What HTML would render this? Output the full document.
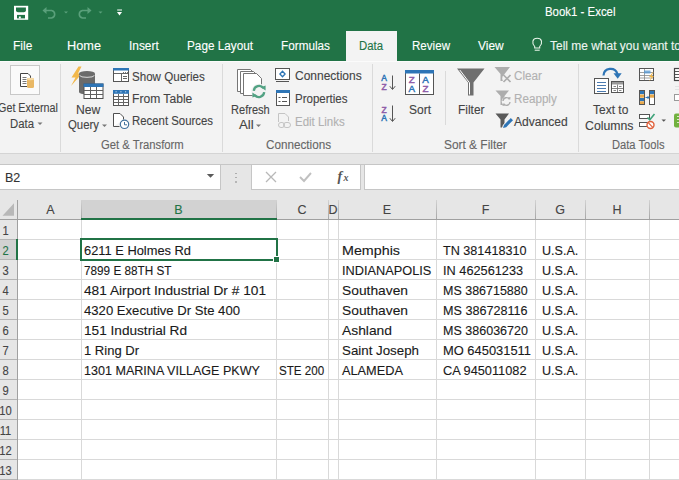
<!DOCTYPE html><html><head><meta charset="utf-8"><style>
html,body{margin:0;padding:0;}
body{width:679px;height:480px;overflow:hidden;position:relative;background:#e6e6e6;font-family:"Liberation Sans",sans-serif;}
body>div{position:absolute;}
.t{white-space:nowrap;line-height:normal;-webkit-text-stroke:0.12px currentColor;}
</style></head><body>
<div style="left:0px;top:0px;width:679px;height:61px;background:#217346"></div>
<div style="left:346px;top:31px;width:51px;height:31px;background:#f3f3f3"></div>
<div class="t" style="left:545.00px;top:5.09px;font-size:12.5px;color:#fff;transform:scaleX(0.9142);transform-origin:0 0;">Book1 - Excel</div>
<div class="t" style="left:13.00px;top:38.69px;font-size:12.5px;color:#fff;transform:scaleX(0.9582);transform-origin:0 0;">File</div>
<div class="t" style="left:67.00px;top:38.69px;font-size:12.5px;color:#fff;transform:scaleX(1.0197);transform-origin:0 0;">Home</div>
<div class="t" style="left:129.00px;top:38.69px;font-size:12.5px;color:#fff;transform:scaleX(0.9500);transform-origin:0 0;">Insert</div>
<div class="t" style="left:187.00px;top:38.69px;font-size:12.5px;color:#fff;transform:scaleX(0.9402);transform-origin:0 0;">Page Layout</div>
<div class="t" style="left:281.40px;top:38.69px;font-size:12.5px;color:#fff;transform:scaleX(0.9406);transform-origin:0 0;">Formulas</div>
<div class="t" style="left:412.30px;top:38.69px;font-size:12.5px;color:#fff;transform:scaleX(0.9271);transform-origin:0 0;">Review</div>
<div class="t" style="left:478.00px;top:38.69px;font-size:12.5px;color:#fff;transform:scaleX(0.9565);transform-origin:0 0;">View</div>
<div class="t" style="left:359.00px;top:38.69px;font-size:12.5px;color:#217346;transform:scaleX(0.9089);transform-origin:0 0;">Data</div>
<div class="t" style="left:550.00px;top:38.69px;font-size:12.5px;color:#eef5f0;transform:scaleX(0.9571);transform-origin:0 0;">Tell me what you want to</div>
<svg style="position:absolute;left:0;top:0" width="679" height="60"><rect x="14" y="5.8" width="14.2" height="14" fill="#fff"/><path d="M16 7.4H25.9V10.2Q25.9 12.2 23.9 12.2H18Q16 12.2 16 10.2Z" fill="#217346"/><rect x="17" y="14.9" width="8" height="3.5" fill="#217346"/><rect x="18.9" y="16.5" width="1.9" height="2" fill="#fff"/><path d="M45 10.5H51.5A3.8 3.8 0 0 1 51.5 18H48" stroke="#5aa07b" stroke-width="1.6" fill="none"/><path d="M42.5 10.5L46.5 7V14Z" fill="#5aa07b"/><path d="M89 10.5H82.5A3.8 3.8 0 0 0 82.5 18H86" stroke="#5aa07b" stroke-width="1.6" fill="none"/><path d="M91.5 10.5L87.5 7V14Z" fill="#5aa07b"/><path d="M64 11.5h4l-2 2z" fill="#5aa07b"/><path d="M98.5 11.5h4l-2 2z" fill="#5aa07b"/><path d="M117.2 10h4.8" stroke="#fff" stroke-width="1"/><path d="M117 12h5l-2.5 3.5z" fill="#fff"/><path d="M534.7 46.5C531.5 43 532.3 38.3 537.2 38.3C542.1 38.3 542.9 43 539.7 46.5V48H534.7Z" fill="none" stroke="#e8f5ea" stroke-width="1.1"/><path d="M534.7 50.2h5" stroke="#e8f5ea" stroke-width="1.1"/></svg>
<div style="left:0px;top:61px;width:679px;height:92px;background:#f3f3f3"></div>
<div style="left:0px;top:61px;width:679px;height:1px;background:#fbfbfb"></div>
<div style="left:0px;top:153px;width:679px;height:1px;background:#d4d4d4"></div>
<div class="t" style="left:-2.50px;top:101.19px;font-size:12.5px;color:#444;transform:scaleX(0.8621);transform-origin:0 0;">Get External</div>
<div class="t" style="left:10.30px;top:116.99px;font-size:12.5px;color:#444;transform:scaleX(0.9089);transform-origin:0 0;">Data</div>
<div class="t" style="left:75.50px;top:103.19px;font-size:12.5px;color:#444;transform:scaleX(0.9717);transform-origin:0 0;">New</div>
<div class="t" style="left:67.50px;top:117.69px;font-size:12.5px;color:#444;transform:scaleX(0.9107);transform-origin:0 0;">Query</div>
<div class="t" style="left:132.00px;top:69.69px;font-size:12.5px;color:#444;transform:scaleX(0.9273);transform-origin:0 0;">Show Queries</div>
<div class="t" style="left:132.00px;top:91.69px;font-size:12.5px;color:#444;transform:scaleX(0.9680);transform-origin:0 0;">From Table</div>
<div class="t" style="left:132.00px;top:114.19px;font-size:12.5px;color:#444;transform:scaleX(0.9108);transform-origin:0 0;">Recent Sources</div>
<div class="t" style="left:100.80px;top:138.19px;font-size:12.5px;color:#666;transform:scaleX(0.9019);transform-origin:0 0;">Get &amp; Transform</div>
<div class="t" style="left:230.60px;top:102.89px;font-size:12.5px;color:#444;transform:scaleX(0.8842);transform-origin:0 0;">Refresh</div>
<div class="t" style="left:239.30px;top:118.19px;font-size:12.5px;color:#444;transform:scaleX(1.0581);transform-origin:0 0;">All</div>
<div class="t" style="left:295.00px;top:69.39px;font-size:12.5px;color:#444;transform:scaleX(0.9598);transform-origin:0 0;">Connections</div>
<div class="t" style="left:295.00px;top:91.99px;font-size:12.5px;color:#444;transform:scaleX(0.9215);transform-origin:0 0;">Properties</div>
<div class="t" style="left:295.00px;top:114.69px;font-size:12.5px;color:#b1b1b1;transform:scaleX(0.9171);transform-origin:0 0;">Edit Links</div>
<div class="t" style="left:265.50px;top:137.69px;font-size:12.5px;color:#666;transform:scaleX(0.9368);transform-origin:0 0;">Connections</div>
<div class="t" style="left:409.00px;top:103.19px;font-size:12.5px;color:#444;transform:scaleX(0.9596);transform-origin:0 0;">Sort</div>
<div class="t" style="left:458.30px;top:103.19px;font-size:12.5px;color:#444;transform:scaleX(0.9540);transform-origin:0 0;">Filter</div>
<div class="t" style="left:513.80px;top:68.69px;font-size:12.5px;color:#b1b1b1;transform:scaleX(0.9373);transform-origin:0 0;">Clear</div>
<div class="t" style="left:513.80px;top:91.99px;font-size:12.5px;color:#b1b1b1;transform:scaleX(0.9332);transform-origin:0 0;">Reapply</div>
<div class="t" style="left:513.80px;top:115.19px;font-size:12.5px;color:#444;transform:scaleX(0.9641);transform-origin:0 0;">Advanced</div>
<div class="t" style="left:444.20px;top:137.69px;font-size:12.5px;color:#666;transform:scaleX(0.9517);transform-origin:0 0;">Sort &amp; Filter</div>
<div class="t" style="left:592.70px;top:103.49px;font-size:12.5px;color:#444;transform:scaleX(0.9587);transform-origin:0 0;">Text to</div>
<div class="t" style="left:585.40px;top:119.49px;font-size:12.5px;color:#444;transform:scaleX(0.9833);transform-origin:0 0;">Columns</div>
<div class="t" style="left:611.50px;top:137.69px;font-size:12.5px;color:#666;transform:scaleX(0.8924);transform-origin:0 0;">Data Tools</div>
<svg style="position:absolute;left:0;top:0" width="679" height="160" viewBox="0 0 679 160"><rect x="10.5" y="65.5" width="29" height="29" fill="#fafafa" stroke="#c8c8c8"/><path d="M20.5 73.5H28L30.5 76V86.5H20.5Z" fill="#fff" stroke="#444" stroke-width="1"/><path d="M22.5 77.5h4M22.5 79.5h4M22.5 81.5h4M22.5 83.5h4" stroke="#555" stroke-width="0.8"/><rect x="27" y="78" width="7" height="10" rx="1.5" fill="#e9b865"/><ellipse cx="30.5" cy="79" rx="3.5" ry="1.2" fill="#f6d9a3"/><path d="M37.5 122.5h5l-2.5 2.5z" fill="#777"/><path d="M78.5 66.5L71.5 77.5H75.5L71 86L82 73.5H78L81.5 66.5Z" fill="#f2b84b"/><path d="M79 73.5a8 2.5 0 0 1 16 0V92a8 2.5 0 0 1 -16 0Z" fill="#6b6b6b"/><path d="M79.6 75.5a7.5 2.2 0 0 0 14.8 0" stroke="#e8e8e8" stroke-width="0.9" fill="none"/><rect x="84" y="84" width="19" height="14.5" fill="#fff" stroke="#505050" stroke-width="1"/><rect x="83.5" y="83.5" width="20" height="3.5" fill="#2e75b6"/><path d="M90.5 87V98M96.5 87V98M84 90.5H103M84 94.5H103" stroke="#606060" stroke-width="1"/><path d="M102 124.5h5l-2.5 2.5z" fill="#777"/><rect x="113.5" y="68.5" width="15" height="13" fill="#fff" stroke="#555"/><rect x="113" y="68" width="16" height="2.5" fill="#2e75b6"/><path d="M123 72.5h1M125 72.5h1M127 72.5h1" stroke="#777" stroke-width="1"/><path d="M114 73.5H128M121.5 73.5V81.5M123 76.5h4M123 78.5h4" stroke="#666" stroke-width="1"/><rect x="113.5" y="90.5" width="15" height="15" fill="#fff" stroke="#555"/><rect x="113" y="90" width="16" height="3.8" fill="#2e75b6"/><path d="M115.5 91.8h1.2M120.3 91.8h1.2M125 91.8h1.2" stroke="#cfe0f3" stroke-width="1"/><path d="M118.5 94V105.5M123.5 94V105.5M114 96.5H128M114 99.5H128M114 102.5H128" stroke="#666" stroke-width="1"/><path d="M113.5 126.5V113.5H120L123.5 117V119.5M119.5 126.5H113.5" fill="#fff" stroke="#505050"/><circle cx="124.5" cy="124.3" r="4.2" fill="#fff" stroke="#41719c" stroke-width="1.2"/><path d="M124.5 122V124.8H127" stroke="#41719c" stroke-width="1" fill="none"/><path d="M237.5 69.5H250.5L255.5 74.5V91.5H237.5Z" fill="#fff" stroke="#666" stroke-width="0.9"/><path d="M240.5 71.5H253.5L258.5 76.5V93.5H240.5Z" fill="#fff" stroke="#666" stroke-width="0.9"/><path d="M243.5 73.5H256.5L261.5 78.5V95.5H243.5Z" fill="#fff" stroke="#666" stroke-width="0.9"/><circle cx="259" cy="91.5" r="7.8" fill="#f3f3f3"/><path d="M253.8 90.8a5.3 5.3 0 0 1 9.6 -2.6M264.2 92.2a5.3 5.3 0 0 1 -9.6 2.6" stroke="#52a283" stroke-width="2.3" fill="none"/><path d="M260.8 87.2l4.8 -1.6v4.8zM257.2 95.8l-4.8 1.6v-4.8z" fill="#52a283"/><path d="M256 124.5h5l-2.5 2.5z" fill="#777"/><rect x="275.5" y="68.5" width="14" height="11" fill="#fff" stroke="#555"/><path d="M276 81.5h13" stroke="#555"/><path d="M282.5 71.2l2.6 2.8l-2.6 2.8l-2.6 -2.8z" fill="none" stroke="#2e75b6" stroke-width="1.3"/><rect x="276.5" y="90.5" width="13" height="15" fill="#fff" stroke="#555"/><rect x="276" y="90" width="14" height="3" fill="#2e75b6"/><path d="M278.5 97.5h2M282 97.5h5M278.5 101.5h2M282 101.5h5" stroke="#555" stroke-width="1.1"/><path d="M278.5 122V113.5H285L288.5 117V121" fill="none" stroke="#c4c4c4"/><rect x="278.5" y="122.5" width="6" height="5" rx="2.5" fill="none" stroke="#c4c4c4"/><rect x="283.5" y="122.5" width="7" height="5" rx="2.5" fill="none" stroke="#c4c4c4"/><text x="381.2" y="81" font-family="Liberation Sans" font-size="8.5" fill="#2e75b6" stroke="#2e75b6" stroke-width="0.45">A</text><text x="381.6" y="89.5" font-family="Liberation Sans" font-size="8.5" fill="#8e5ba8" stroke="#8e5ba8" stroke-width="0.45">Z</text><path d="M392.5 75.5V89M389.8 86.2l2.7 3.3l2.7 -3.3" stroke="#555" stroke-width="1" fill="none"/><text x="381.6" y="112.5" font-family="Liberation Sans" font-size="8.5" fill="#8e5ba8" stroke="#8e5ba8" stroke-width="0.45">Z</text><text x="381.2" y="121.2" font-family="Liberation Sans" font-size="8.5" fill="#2e75b6" stroke="#2e75b6" stroke-width="0.45">A</text><path d="M392.5 105.5V121M389.8 118.2l2.7 3.3l2.7 -3.3" stroke="#555" stroke-width="1" fill="none"/><rect x="405.5" y="70.5" width="28" height="24" fill="#fff" stroke="#555"/><rect x="405" y="70" width="29" height="3.5" fill="#2e75b6"/><path d="M419.5 73.5V94.5" stroke="#555"/><text x="408.8" y="83.2" font-family="Liberation Sans" font-size="9.8" fill="#8e5ba8" stroke="#8e5ba8" stroke-width="0.45">Z</text><text x="422.3" y="83.2" font-family="Liberation Sans" font-size="9.8" fill="#2e75b6" stroke="#2e75b6" stroke-width="0.45">A</text><text x="408.5" y="92.2" font-family="Liberation Sans" font-size="9.8" fill="#2e75b6" stroke="#2e75b6" stroke-width="0.45">A</text><text x="422.6" y="92.2" font-family="Liberation Sans" font-size="9.8" fill="#8e5ba8" stroke="#8e5ba8" stroke-width="0.45">Z</text><path d="M457 68.5H484.5L473.5 82.5V95.5H468V82.5Z" fill="#6f6f6f"/><path d="M459.8 70L469.5 82.8V94.5" stroke="#fff" stroke-width="1" fill="none"/><path d="M494.5 67H510L504.5 74V81H500.5V74Z" fill="#adadad"/><circle cx="507" cy="78.5" r="4.8" fill="#f3f3f3"/><path d="M503.5 75l7 7M510.5 75l-7 7" stroke="#adadad" stroke-width="1.7"/><path d="M495.5 90.5H509L504.5 96V105H500.5V96Z" fill="#adadad"/><circle cx="506.5" cy="101.5" r="4.8" fill="#f3f3f3"/><path d="M503 101a3.5 3.5 0 0 1 6.5 -1.6M510 102a3.5 3.5 0 0 1 -6.5 1.6" stroke="#adadad" stroke-width="1.4" fill="none"/><path d="M508 97.5l2.5 -0.5l-0.3 2.8zM505 105.5l-2.5 0.5l0.3 -2.8z" fill="#adadad"/><path d="M495.5 113.5H509L504.5 119.5V127.5H500.5V119.5Z" fill="#5a5a5a"/><path d="M502.5 128.5l1 -3.2l7 -7.2l2.6 2.6l-7 7.2z" fill="#f3f3f3" stroke="#f3f3f3" stroke-width="1.4"/><path d="M503 128l1 -3l6.8 -7l2.2 2.2l-6.8 7z" fill="#2e75b6"/><rect x="594.5" y="78.5" width="14" height="15" fill="#fff" stroke="#555"/><path d="M597 82.5h9M597 85.5h9M597 88.5h9M597 91.5h9" stroke="#4a7ab0" stroke-width="1"/><rect x="611.5" y="81.5" width="12" height="11" fill="#fff" stroke="#555"/><rect x="612" y="82" width="11" height="2.5" fill="#999"/><path d="M617.5 84.5V92M612 88.5h11M613.5 86.5h2.5M619 86.5h2.5M613.5 90.5h2.5M619 90.5h2.5" stroke="#777" stroke-width="0.9"/><path d="M603.5 75.5C604 67.5 615 66.5 617.5 74" stroke="#2e75b6" stroke-width="2.2" fill="none"/><path d="M613.5 73.2h8.2l-4 5.6z" fill="#2e75b6"/><rect x="639.5" y="68.5" width="14" height="12" fill="#fff" stroke="#555"/><path d="M640 72.5h13M640 75.5h13M640 78h13M644.5 69V80" stroke="#888" stroke-width="0.8"/><rect x="644" y="70.5" width="6.5" height="3" fill="#5b9bd5" fill-opacity="0.8"/><path d="M653 72l-4 5h2.5l-2.5 4.5l5 -5.5h-2.5l2 -4z" fill="#f2b84b"/><rect x="639.5" y="90.5" width="5" height="14" fill="#fff" stroke="#555"/><rect x="649.5" y="90.5" width="5" height="14" fill="#fff" stroke="#555"/><rect x="640" y="91" width="4" height="3.2" fill="#2e75b6"/><rect x="640" y="94.5" width="4" height="3.2" fill="#e8a94c"/><rect x="640" y="98" width="4" height="3.2" fill="#2e75b6"/><rect x="640" y="101.3" width="4" height="2.7" fill="#e8a94c"/><rect x="650" y="91" width="4" height="3.2" fill="#2e75b6"/><rect x="650" y="94.5" width="4" height="3.2" fill="#e8a94c"/><path d="M645.5 97.5h3.5M647.5 96l1.5 1.5l-1.5 1.5" stroke="#2e75b6" stroke-width="1" fill="none"/><rect x="639.5" y="114.5" width="10" height="4" fill="#fff" stroke="#555"/><rect x="639.5" y="122.5" width="10" height="4" fill="#fff" stroke="#555"/><path d="M647.5 117.5l2.3 2.3l4.7 -5.8" stroke="#3fa37a" stroke-width="1.6" fill="none"/><circle cx="650.5" cy="125" r="3.5" fill="#fff" stroke="#e0603a" stroke-width="1.4"/><path d="M648.2 122.7l4.6 4.6" stroke="#e0603a" stroke-width="1.2"/><path d="M661.5 119.5h4.5l-2.25 2.3z" fill="#555"/><rect x="674.5" y="68.5" width="8" height="12" fill="#fff" stroke="#444" stroke-width="1.2"/><path d="M674.5 71.5h8M674.5 74.5h8M674.5 77.5h8" stroke="#444" stroke-width="0.9"/><path d="M679 86.5h-4M679 89.5h-4" stroke="#ddd" stroke-width="0.8"/><rect x="674.5" y="94.5" width="8" height="6" fill="#fff" stroke="#999"/><rect x="674" y="113.5" width="9" height="14" rx="2" fill="#72b13f"/><path d="M677 116.5h3M677 119.5h3M677 122.5h3" stroke="#d8ecc8" stroke-width="1"/></svg>
<div style="left:60px;top:64px;width:1px;height:88px;background:#dadada"></div>
<div style="left:222px;top:64px;width:1px;height:88px;background:#dadada"></div>
<div style="left:372px;top:64px;width:1px;height:88px;background:#dadada"></div>
<div style="left:578px;top:64px;width:1px;height:88px;background:#dadada"></div>
<div style="left:445px;top:71px;width:1px;height:54px;background:#dadada"></div>
<div style="left:0px;top:154px;width:679px;height:10px;background:#e6e6e6"></div>
<div style="left:0px;top:164px;width:679px;height:1px;background:#c6c6c6"></div>
<div style="left:0px;top:165px;width:221px;height:25px;background:#fff;border:1px solid #c6c6c6;border-left:none;border-top:none;box-sizing:border-box"></div>
<div class="t" style="left:4.50px;top:170.69px;font-size:12.5px;color:#333;transform:scaleX(1.0007);transform-origin:0 0;">B2</div>
<svg style="position:absolute;left:206px;top:173px" width="10" height="6"><path d="M0.8 1H8.2L4.5 4.8Z" fill="#5a5a5a"/></svg>
<div style="left:235px;top:172.6px;width:1.6px;height:1.6px;background:#a6a6a6;border-radius:1px"></div>
<div style="left:235px;top:176.8px;width:1.6px;height:1.6px;background:#a6a6a6;border-radius:1px"></div>
<div style="left:235px;top:181px;width:1.6px;height:1.6px;background:#a6a6a6;border-radius:1px"></div>
<div style="left:251px;top:164px;width:110px;height:26px;background:#fff;border:1px solid #c6c6c6;box-sizing:border-box"></div>
<svg style="position:absolute;left:264px;top:170px" width="14" height="14"><path d="M2 2L12 12M12 2L2 12" stroke="#b8b8b8" stroke-width="1.3" fill="none"/></svg>
<svg style="position:absolute;left:298px;top:170px" width="15" height="14"><path d="M2 7L6 11L13 3" stroke="#c0c0c0" stroke-width="1.9" fill="none"/></svg>
<svg style="position:absolute;left:331.5px;top:166px" width="24" height="20"><text x="5.5" y="14.5" font-family="Liberation Serif" font-style="italic" font-weight="bold" font-size="14" fill="#555">f</text><text x="11.5" y="14.5" font-family="Liberation Serif" font-style="italic" font-weight="bold" font-size="10" fill="#555">x</text></svg>
<div style="left:364px;top:164px;width:315px;height:26px;background:#fff;border:1px solid #c6c6c6;border-right:none;box-sizing:border-box"></div>
<div style="left:0px;top:200px;width:679px;height:19px;background:#e6e6e6"></div>
<div style="left:81px;top:200px;width:195px;height:19px;background:#d2d2d2"></div>
<div style="left:0px;top:219px;width:679px;height:1px;background:#a0a0a0"></div>
<div style="left:17px;top:200px;width:1px;height:280px;background:#a0a0a0"></div>
<div style="left:0px;top:220px;width:17px;height:260px;background:#e6e6e6"></div>
<div style="left:0px;top:239px;width:17px;height:21px;background:#d2d2d2"></div>
<svg style="position:absolute;left:0;top:200px" width="17" height="19"><path d="M2.5 15.7L14 15.7L14 3.2Z" fill="#b8b8b8"/></svg>
<div style="left:18px;top:220px;width:661px;height:260px;background:#fff"></div>
<div style="left:81px;top:200px;width:1px;height:19px;background:linear-gradient(#d2d2d2,#a6a6a6)"></div>
<div style="left:276px;top:200px;width:1px;height:19px;background:linear-gradient(#d2d2d2,#a6a6a6)"></div>
<div style="left:328px;top:200px;width:1px;height:19px;background:linear-gradient(#d2d2d2,#a6a6a6)"></div>
<div style="left:338px;top:200px;width:1px;height:19px;background:linear-gradient(#d2d2d2,#a6a6a6)"></div>
<div style="left:436px;top:200px;width:1px;height:19px;background:linear-gradient(#d2d2d2,#a6a6a6)"></div>
<div style="left:535px;top:200px;width:1px;height:19px;background:linear-gradient(#d2d2d2,#a6a6a6)"></div>
<div style="left:585px;top:200px;width:1px;height:19px;background:linear-gradient(#d2d2d2,#a6a6a6)"></div>
<div style="left:649px;top:200px;width:1px;height:19px;background:linear-gradient(#d2d2d2,#a6a6a6)"></div>
<div style="left:0px;top:239px;width:17px;height:1px;background:#b4b4b4"></div>
<div style="left:0px;top:259px;width:17px;height:1px;background:#b4b4b4"></div>
<div style="left:0px;top:279px;width:17px;height:1px;background:#b4b4b4"></div>
<div style="left:0px;top:299px;width:17px;height:1px;background:#b4b4b4"></div>
<div style="left:0px;top:319px;width:17px;height:1px;background:#b4b4b4"></div>
<div style="left:0px;top:339px;width:17px;height:1px;background:#b4b4b4"></div>
<div style="left:0px;top:359px;width:17px;height:1px;background:#b4b4b4"></div>
<div style="left:0px;top:379px;width:17px;height:1px;background:#b4b4b4"></div>
<div style="left:0px;top:399px;width:17px;height:1px;background:#b4b4b4"></div>
<div style="left:0px;top:419px;width:17px;height:1px;background:#b4b4b4"></div>
<div style="left:0px;top:439px;width:17px;height:1px;background:#b4b4b4"></div>
<div style="left:0px;top:459px;width:17px;height:1px;background:#b4b4b4"></div>
<div style="left:0px;top:479px;width:17px;height:1px;background:#b4b4b4"></div>
<div style="left:81px;top:220px;width:1px;height:260px;background:#d9d9d9"></div>
<div style="left:276px;top:220px;width:1px;height:260px;background:#d9d9d9"></div>
<div style="left:328px;top:220px;width:1px;height:260px;background:#d9d9d9"></div>
<div style="left:338px;top:220px;width:1px;height:260px;background:#d9d9d9"></div>
<div style="left:436px;top:220px;width:1px;height:260px;background:#d9d9d9"></div>
<div style="left:535px;top:220px;width:1px;height:260px;background:#d9d9d9"></div>
<div style="left:585px;top:220px;width:1px;height:260px;background:#d9d9d9"></div>
<div style="left:649px;top:220px;width:1px;height:260px;background:#d9d9d9"></div>
<div style="left:18px;top:239px;width:661px;height:1px;background:#d9d9d9"></div>
<div style="left:18px;top:259px;width:661px;height:1px;background:#d9d9d9"></div>
<div style="left:18px;top:279px;width:661px;height:1px;background:#d9d9d9"></div>
<div style="left:18px;top:299px;width:661px;height:1px;background:#d9d9d9"></div>
<div style="left:18px;top:319px;width:661px;height:1px;background:#d9d9d9"></div>
<div style="left:18px;top:339px;width:661px;height:1px;background:#d9d9d9"></div>
<div style="left:18px;top:359px;width:661px;height:1px;background:#d9d9d9"></div>
<div style="left:18px;top:379px;width:661px;height:1px;background:#d9d9d9"></div>
<div style="left:18px;top:399px;width:661px;height:1px;background:#d9d9d9"></div>
<div style="left:18px;top:419px;width:661px;height:1px;background:#d9d9d9"></div>
<div style="left:18px;top:439px;width:661px;height:1px;background:#d9d9d9"></div>
<div style="left:18px;top:459px;width:661px;height:1px;background:#d9d9d9"></div>
<div style="left:18px;top:479px;width:661px;height:1px;background:#d9d9d9"></div>
<div class="t" style="left:18.5px;width:64px;top:203.19px;text-align:center;font-size:12.5px;color:#444">A</div>
<div class="t" style="left:81px;width:195px;top:203.19px;text-align:center;font-size:12.5px;color:#217346">B</div>
<div class="t" style="left:276px;width:52px;top:203.19px;text-align:center;font-size:12.5px;color:#444">C</div>
<div class="t" style="left:328px;width:10px;top:203.19px;text-align:center;font-size:12.5px;color:#444">D</div>
<div class="t" style="left:338px;width:98px;top:203.19px;text-align:center;font-size:12.5px;color:#444">E</div>
<div class="t" style="left:436px;width:99px;top:203.19px;text-align:center;font-size:12.5px;color:#444">F</div>
<div class="t" style="left:535px;width:50px;top:203.19px;text-align:center;font-size:12.5px;color:#444">G</div>
<div class="t" style="left:585px;width:64px;top:203.19px;text-align:center;font-size:12.5px;color:#444">H</div>
<div class="t" style="left:-20px;width:51px;top:222.74px;text-align:center;font-size:13px;color:#444;transform:scaleX(0.86)">1</div>
<div class="t" style="left:-20px;width:51px;top:242.74px;text-align:center;font-size:13px;color:#217346;transform:scaleX(0.86)">2</div>
<div class="t" style="left:-20px;width:51px;top:262.74px;text-align:center;font-size:13px;color:#444;transform:scaleX(0.86)">3</div>
<div class="t" style="left:-20px;width:51px;top:282.74px;text-align:center;font-size:13px;color:#444;transform:scaleX(0.86)">4</div>
<div class="t" style="left:-20px;width:51px;top:302.74px;text-align:center;font-size:13px;color:#444;transform:scaleX(0.86)">5</div>
<div class="t" style="left:-20px;width:51px;top:322.74px;text-align:center;font-size:13px;color:#444;transform:scaleX(0.86)">6</div>
<div class="t" style="left:-20px;width:51px;top:342.74px;text-align:center;font-size:13px;color:#444;transform:scaleX(0.86)">7</div>
<div class="t" style="left:-20px;width:51px;top:362.74px;text-align:center;font-size:13px;color:#444;transform:scaleX(0.86)">8</div>
<div class="t" style="left:-20px;width:51px;top:382.74px;text-align:center;font-size:13px;color:#444;transform:scaleX(0.86)">9</div>
<div class="t" style="left:-20px;width:51px;top:402.74px;text-align:center;font-size:13px;color:#444;transform:scaleX(0.86)">10</div>
<div class="t" style="left:-20px;width:51px;top:422.74px;text-align:center;font-size:13px;color:#444;transform:scaleX(0.86)">11</div>
<div class="t" style="left:-20px;width:51px;top:442.74px;text-align:center;font-size:13px;color:#444;transform:scaleX(0.86)">12</div>
<div class="t" style="left:-20px;width:51px;top:462.74px;text-align:center;font-size:13px;color:#444;transform:scaleX(0.86)">13</div>
<div style="left:81px;top:218px;width:196px;height:2px;background:#217346"></div>
<div style="left:16px;top:239px;width:2px;height:21px;background:#217346"></div>
<div style="left:80px;top:238px;width:198px;height:23px;border:2px solid #217346;box-sizing:border-box"></div>
<div style="left:273px;top:256px;width:5px;height:5px;background:#217346;border:1px solid #fff"></div>
<div class="t" style="left:84.00px;top:243.24px;font-size:13px;color:#1a1a1a;transform:scaleX(0.9894);transform-origin:0 0;">6211 E Holmes Rd</div>
<div class="t" style="left:341.50px;top:243.24px;font-size:13px;color:#1a1a1a;transform:scaleX(1.0998);transform-origin:0 0;">Memphis</div>
<div class="t" style="left:442.50px;top:243.24px;font-size:13px;color:#1a1a1a;transform:scaleX(0.9708);transform-origin:0 0;">TN 381418310</div>
<div class="t" style="left:541.60px;top:243.24px;font-size:13px;color:#1a1a1a;transform:scaleX(0.9663);transform-origin:0 0;">U.S.A.</div>
<div class="t" style="left:84.00px;top:263.24px;font-size:13px;color:#1a1a1a;transform:scaleX(0.9036);transform-origin:0 0;">7899 E 88TH ST</div>
<div class="t" style="left:341.50px;top:263.24px;font-size:13px;color:#1a1a1a;transform:scaleX(0.9810);transform-origin:0 0;">INDIANAPOLIS</div>
<div class="t" style="left:442.50px;top:263.24px;font-size:13px;color:#1a1a1a;transform:scaleX(0.9806);transform-origin:0 0;">IN 462561233</div>
<div class="t" style="left:541.60px;top:263.24px;font-size:13px;color:#1a1a1a;transform:scaleX(0.9663);transform-origin:0 0;">U.S.A.</div>
<div class="t" style="left:84.00px;top:283.24px;font-size:13px;color:#1a1a1a;transform:scaleX(1.0538);transform-origin:0 0;">481 Airport Industrial Dr # 101</div>
<div class="t" style="left:341.50px;top:283.24px;font-size:13px;color:#1a1a1a;transform:scaleX(1.0617);transform-origin:0 0;">Southaven</div>
<div class="t" style="left:442.50px;top:283.24px;font-size:13px;color:#1a1a1a;transform:scaleX(0.9605);transform-origin:0 0;">MS 386715880</div>
<div class="t" style="left:541.60px;top:283.24px;font-size:13px;color:#1a1a1a;transform:scaleX(0.9663);transform-origin:0 0;">U.S.A.</div>
<div class="t" style="left:84.00px;top:303.24px;font-size:13px;color:#1a1a1a;transform:scaleX(1.0087);transform-origin:0 0;">4320 Executive Dr Ste 400</div>
<div class="t" style="left:341.50px;top:303.24px;font-size:13px;color:#1a1a1a;transform:scaleX(1.0617);transform-origin:0 0;">Southaven</div>
<div class="t" style="left:442.50px;top:303.24px;font-size:13px;color:#1a1a1a;transform:scaleX(0.9688);transform-origin:0 0;">MS 386728116</div>
<div class="t" style="left:541.60px;top:303.24px;font-size:13px;color:#1a1a1a;transform:scaleX(0.9663);transform-origin:0 0;">U.S.A.</div>
<div class="t" style="left:84.00px;top:323.24px;font-size:13px;color:#1a1a1a;transform:scaleX(1.0480);transform-origin:0 0;">151 Industrial Rd</div>
<div class="t" style="left:341.50px;top:323.24px;font-size:13px;color:#1a1a1a;transform:scaleX(1.0643);transform-origin:0 0;">Ashland</div>
<div class="t" style="left:442.50px;top:323.24px;font-size:13px;color:#1a1a1a;transform:scaleX(0.9639);transform-origin:0 0;">MS 386036720</div>
<div class="t" style="left:541.60px;top:323.24px;font-size:13px;color:#1a1a1a;transform:scaleX(0.9663);transform-origin:0 0;">U.S.A.</div>
<div class="t" style="left:84.00px;top:343.24px;font-size:13px;color:#1a1a1a;transform:scaleX(1.0017);transform-origin:0 0;">1 Ring Dr</div>
<div class="t" style="left:341.50px;top:343.24px;font-size:13px;color:#1a1a1a;transform:scaleX(1.0244);transform-origin:0 0;">Saint Joseph</div>
<div class="t" style="left:442.50px;top:343.24px;font-size:13px;color:#1a1a1a;transform:scaleX(0.9926);transform-origin:0 0;">MO 645031511</div>
<div class="t" style="left:541.60px;top:343.24px;font-size:13px;color:#1a1a1a;transform:scaleX(0.9663);transform-origin:0 0;">U.S.A.</div>
<div class="t" style="left:84.00px;top:363.24px;font-size:13px;color:#1a1a1a;transform:scaleX(0.9666);transform-origin:0 0;">1301 MARINA VILLAGE PKWY</div>
<div class="t" style="left:279.40px;top:363.24px;font-size:13px;color:#1a1a1a;transform:scaleX(0.8935);transform-origin:0 0;">STE 200</div>
<div class="t" style="left:341.50px;top:363.24px;font-size:13px;color:#1a1a1a;transform:scaleX(0.9818);transform-origin:0 0;">ALAMEDA</div>
<div class="t" style="left:442.50px;top:363.24px;font-size:13px;color:#1a1a1a;transform:scaleX(0.9816);transform-origin:0 0;">CA 945011082</div>
<div class="t" style="left:541.60px;top:363.24px;font-size:13px;color:#1a1a1a;transform:scaleX(0.9663);transform-origin:0 0;">U.S.A.</div>
</body></html>
